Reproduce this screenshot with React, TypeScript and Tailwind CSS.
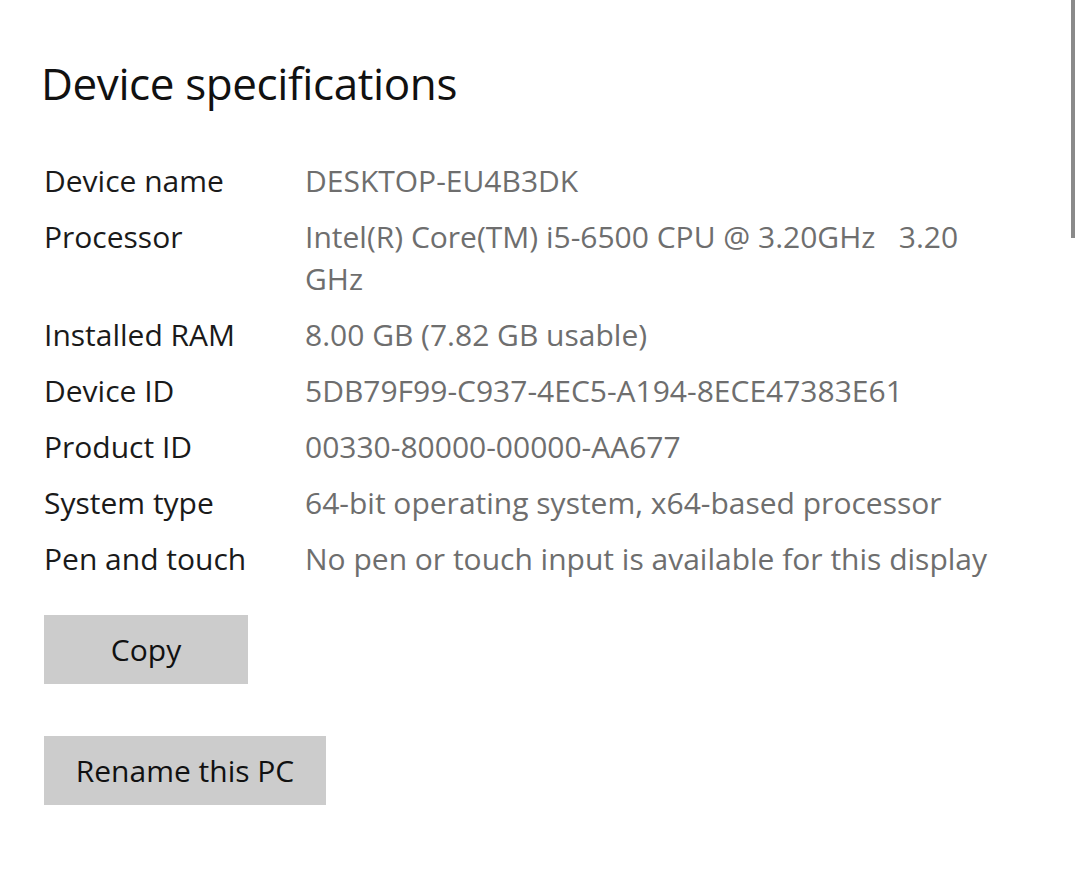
const specs: { label: string; value: string[] }[] = [
  { label: "Device name", value: ["DESKTOP-EU4B3DK"] },
  { label: "Processor", value: ["Intel(R) Core(TM) i5-6500 CPU @ 3.20GHz   3.20", "GHz"] },
  { label: "Installed RAM", value: ["8.00 GB (7.82 GB usable)"] },
  { label: "Device ID", value: ["5DB79F99-C937-4EC5-A194-8ECE47383E61"] },
  { label: "Product ID", value: ["00330-80000-00000-AA677"] },
  { label: "System type", value: ["64-bit operating system, x64-based processor"] },
  { label: "Pen and touch", value: ["No pen or touch input is available for this display"] },
];

export default function App() {
  return (
    <div
      className="relative w-[1080px] h-[873px] bg-white overflow-hidden"
      style={{ fontFamily: '"Open Sans", "Noto Sans", sans-serif' }}
    >
      <div className="absolute right-[5px] top-0 w-[4px] h-[238px] bg-[#8a8a8a]" />

      <div className="pl-[41px] pt-[56px]">
        <h1 className="text-[44px] leading-[54px] text-[#111] tracking-[-0.4px]">Device specifications</h1>

        <div className="mt-[50px] flex flex-col gap-[14px]">
          {specs.map((s) => (
            <div key={s.label} className="flex text-[30px] leading-[42px]">
              <div className="w-[264px] pl-[3px] text-[#1a1a1a]">{s.label}</div>
              <div className="text-[#6e6e6e] whitespace-pre">
                {s.value.map((v) => (
                  <div key={v}>{v}</div>
                ))}
              </div>
            </div>
          ))}
        </div>

        <div className="mt-[35px] flex flex-col items-start gap-[52px] pl-[3px]">
          <button className="w-[204px] h-[69px] bg-[#cccccc] text-[30px] text-[#111]">
            Copy
          </button>
          <button className="w-[282px] h-[69px] bg-[#cccccc] text-[30px] text-[#111]">
            Rename this PC
          </button>
        </div>
      </div>
    </div>
  );
}
